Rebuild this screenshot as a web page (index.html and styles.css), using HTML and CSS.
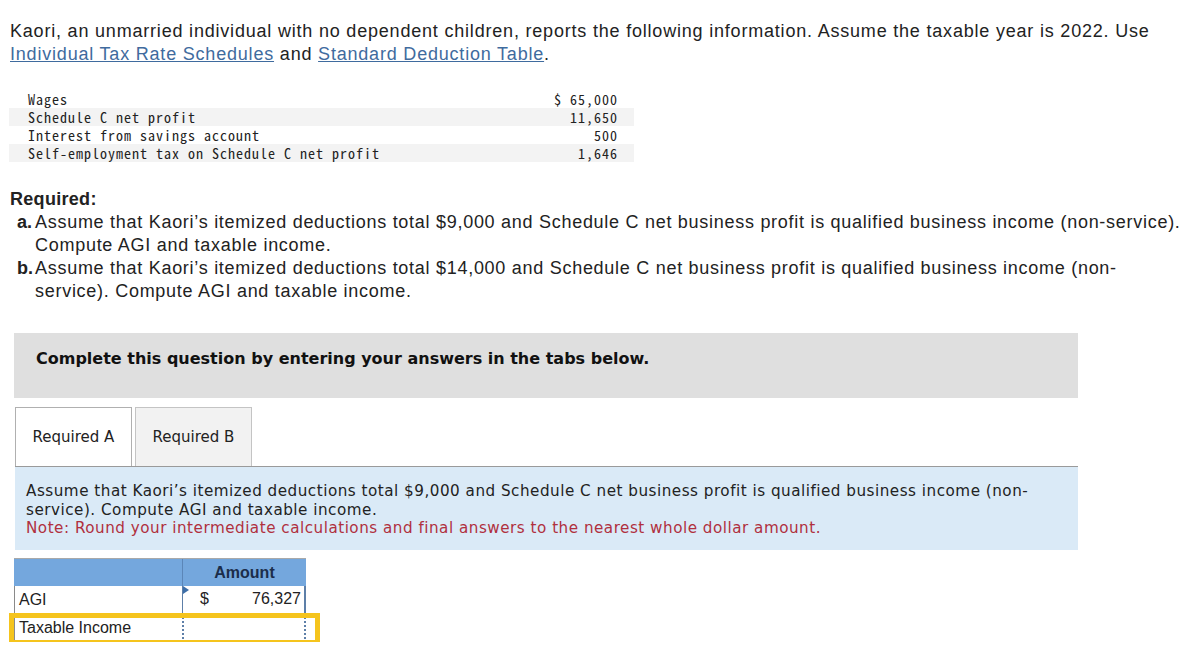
FILE: index.html
```html
<!DOCTYPE html>
<html>
<head>
<meta charset="utf-8">
<link rel="stylesheet" href="styles.css">
</head>
<body>
<div class="page">
  <p class="intro">Kaori, an unmarried individual with no dependent children, reports the following information. Assume the taxable year is 2022. Use <a href="#">Individual Tax Rate Schedules</a> and <a href="#">Standard Deduction Table</a>.</p>

  <div class="facts">
    <div class="fact"><span>Wages</span><span>$ 65,000</span></div>
    <div class="fact alt"><span>Schedule C net profit</span><span>11,650</span></div>
    <div class="fact"><span>Interest from savings account</span><span>500</span></div>
    <div class="fact alt"><span>Self-employment tax on Schedule C net profit</span><span>1,646</span></div>
  </div>

  <div class="required">
    <div class="req-title">Required:</div>
    <div class="req-item"><span class="req-lbl">a.</span><span>Assume that Kaori’s itemized deductions total $9,000 and Schedule C net business profit is qualified business income (non-service). Compute AGI and taxable income.</span></div>
    <div class="req-item"><span class="req-lbl">b.</span><span>Assume that Kaori’s itemized deductions total $14,000 and Schedule C net business profit is qualified business income (non-service). Compute AGI and taxable income.</span></div>
  </div>

  <div class="instr">Complete this question by entering your answers in the tabs below.</div>

  <div class="tabs">
    <div class="tab active">Required A</div>
    <div class="tab">Required B</div>
  </div>

  <div class="panel">
    <p>Assume that Kaori’s itemized deductions total $9,000 and Schedule C net business profit is qualified business income (non-service). Compute AGI and taxable income.</p>
    <p class="note">Note: Round your intermediate calculations and final answers to the nearest whole dollar amount.</p>
  </div>

  <div class="answer">
    <div class="arow head"><div class="c1"></div><div class="c2">Amount</div></div>
    <div class="arow"><div class="c1">AGI</div><div class="c2 filled"><span class="flag"></span><span>$</span><span>76,327</span></div></div>
    <div class="arow focus"><div class="c1">Taxable Income</div><div class="c2 empty"></div></div>
  </div>
</div>
</body>
</html>
```
FILE: styles.css
```css
* { box-sizing: border-box; }
html, body { margin: 0; padding: 0; background: #fff; }
body { font-family: "Liberation Sans", Arial, sans-serif; color: #222; }

.page { padding: 20px 0 0 10px; width: 1186px; }

.intro {
  margin: 0;
  font-size: 18px;
  line-height: 23px;
  letter-spacing: 0.8px;
  width: 1170px;
}
.intro a { color: #3f6b9e; text-decoration: underline; }

.facts {
  margin-top: 24px;
  width: 625px;
  margin-left: -1px;
  font-family: "Noto Sans Mono CJK KR", "Liberation Mono", monospace;
  font-size: 14px;
  letter-spacing: 1px;
  color: #222;
}
.fact {
  display: flex;
  justify-content: space-between;
  height: 18px;
  line-height: 18px;
  padding: 0 16px 0 19px;
}
.fact.alt { background: #f3f3f3; }

.required { margin-top: 26px; font-size: 18px; line-height: 23px; letter-spacing: 0.72px; }
.req-title { font-weight: bold; letter-spacing: 0.3px; }
.req-item {
  display: grid;
  grid-template-columns: 18px 1150px;
  padding-left: 7px;
}
.req-lbl { font-weight: bold; letter-spacing: 0; }

.instr {
  margin: 30px 0 0 4px;
  width: 1064px;
  height: 65px;
  background: #dfdfdf;
  padding: 16px 0 0 22px;
  font-family: "DejaVu Sans", Verdana, sans-serif;
  font-weight: bold;
  font-size: 16px;
  line-height: 20px;
  color: #111;
}

.tabs {
  margin: 9px 0 0 5px;
  width: 1063px;
  display: flex;
  gap: 3px;
  border-bottom: 1px solid #9a9a9a;
}
.tab {
  width: 117px;
  height: 59px;
  border: 1px solid #c4c4c4;
  border-bottom: none;
  background: #f2f2f2;
  display: flex;
  align-items: center;
  justify-content: center;
  font-family: "DejaVu Sans", Verdana, sans-serif;
  font-size: 15px;
  color: #222;
}
.tab.active { background: #fff; border-color: #b0b0b0; }

.panel {
  margin-left: 5px;
  width: 1063px;
  background: #daeaf7;
  padding: 15px 12px 12px 11px;
  font-family: "DejaVu Sans", Verdana, sans-serif;
  font-size: 15.2px;
  letter-spacing: 0.5px;
  line-height: 18.5px;
  color: #222;
}
.panel p { margin: 0; }
.panel .note { color: #b0303e; }

.answer {
  margin: 8px 0 0 4px;
  width: 292px;
  font-family: "Liberation Sans", Arial, sans-serif;
  font-size: 16px;
  color: #222;
}
.arow {
  display: grid;
  grid-template-columns: 168px 124px;
  height: 28px;
  position: relative;
}
.arow .c1 {
  border-left: 1px solid #8a8a8a;
  padding-left: 4px;
  display: flex;
  align-items: center;
}
.arow.head {
  background: #74a7dd;
  border-top: 1px solid #a9a9a9;
}
.arow.head .c1 { border-left: none; }
.arow.head .c2 {
  border-left: 1px solid #5b86b8;
  font-weight: bold;
  color: #1b2d4a;
  text-align: center;
  line-height: 27px;
}
.c2.filled {
  position: relative;
  border-left: 1px solid #5d7fa8;
  border-right: 2px solid #5d7fa8;
  border-bottom: 1px solid #5d7fa8;
  display: flex;
  align-items: center;
  justify-content: space-between;
  padding: 0 3px 0 17px;
}
.flag {
  position: absolute;
  left: 0;
  top: 0;
  width: 0;
  height: 0;
  border-top: 4px solid transparent;
  border-bottom: 4px solid transparent;
  border-left: 6px solid #3d6ea8;
}
.c2.empty {
  border-left: 2px dotted #5d7fa8;
  border-right: 2px dotted #5d7fa8;
}
.arow.focus::after {
  content: "";
  position: absolute;
  left: -5px;
  right: -14px;
  top: -1px;
  bottom: -3px;
  border: 5px solid #f5c41d;
  pointer-events: none;
}
```
